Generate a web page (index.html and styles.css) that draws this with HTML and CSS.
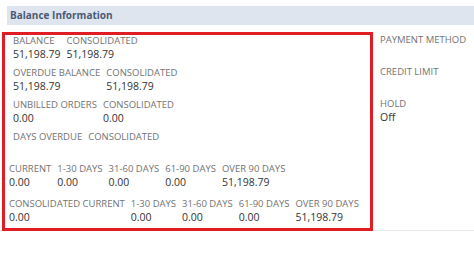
FILE: index.html
```html
<!DOCTYPE html>
<html lang="en">
<head>
  <meta charset="UTF-8">
  <title>Balance Information</title>
  <link rel="stylesheet" href="styles.css">
</head>
<body>
  <div class="section-title">Balance Information</div>

  <div class="section">
    <div class="balance-box">
      <div class="row">
        <div class="field"><div class="label">Balance</div><div class="value">51,198.79</div></div>
        <div class="field"><div class="label">Consolidated</div><div class="value">51,198.79</div></div>
      </div>
      <div class="row">
        <div class="field"><div class="label">Overdue Balance</div><div class="value">51,198.79</div></div>
        <div class="field"><div class="label">Consolidated</div><div class="value">51,198.79</div></div>
      </div>
      <div class="row">
        <div class="field"><div class="label">Unbilled Orders</div><div class="value">0.00</div></div>
        <div class="field"><div class="label">Consolidated</div><div class="value">0.00</div></div>
      </div>
      <div class="row">
        <div class="field"><div class="label">Days Overdue</div><div class="value"></div></div>
        <div class="field"><div class="label">Consolidated</div><div class="value"></div></div>
      </div>

      <!-- aging -->
      <div class="row aging first">
        <div class="field"><div class="label">Current</div><div class="value">0.00</div></div>
        <div class="field"><div class="label">1-30 Days</div><div class="value">0.00</div></div>
        <div class="field"><div class="label">31-60 Days</div><div class="value">0.00</div></div>
        <div class="field"><div class="label">61-90 Days</div><div class="value">0.00</div></div>
        <div class="field"><div class="label">Over 90 Days</div><div class="value">51,198.79</div></div>
      </div>
      <div class="row aging">
        <div class="field"><div class="label">Consolidated Current</div><div class="value">0.00</div></div>
        <div class="field"><div class="label">1-30 Days</div><div class="value">0.00</div></div>
        <div class="field"><div class="label">31-60 Days</div><div class="value">0.00</div></div>
        <div class="field"><div class="label">61-90 Days</div><div class="value">0.00</div></div>
        <div class="field"><div class="label">Over 90 Days</div><div class="value">51,198.79</div></div>
      </div>
    </div>

    <div class="side">
      <div class="field"><div class="label">Payment Method</div><div class="value"></div></div>
      <div class="field"><div class="label">Credit Limit</div><div class="value"></div></div>
      <div class="field"><div class="label">Hold</div><div class="value">Off</div></div>
    </div>
  </div>
</body>
</html>
```

FILE: styles.css
```css
body {
  font-family: "Open Sans", sans-serif;
  background-color: #fff;
  margin: 0;
  padding: 0;
}

.section-title {
  margin: 6px 0 0 7px;
  height: 19px;
  line-height: 19px;
  padding-left: 3px;
  background-color: #dfe5ee;
  color: #4a5a75;
  font-size: 10px;
  font-weight: bold;
}

.section {
  display: flex;
  margin-top: 7px;
  border-bottom: 1px solid #e6e9ef;
}

.balance-box {
  box-sizing: border-box;
  flex-shrink: 0;
  width: 371px;
  margin-left: 2px;
  margin-bottom: -1px;
  border: 3px solid #e11d24;
  padding: 0 0 4px 8px;
}

.row {
  display: flex;
  margin-bottom: 6px;
}

.row.aging {
  margin-left: -4px;
  margin-bottom: 9px;
}

.row.aging.first {
  margin-top: 4px;
}

.row.aging:last-child {
  margin-bottom: 0;
}

.field {
  padding-right: 6px;
}

.label {
  font-size: 9.5px;
  line-height: 12px;
  color: #737373;
  text-transform: uppercase;
  white-space: nowrap;
}

.value {
  font-size: 10.5px;
  line-height: 14px;
  height: 14px;
  color: #333;
  white-space: nowrap;
}

.side {
  flex-shrink: 0;
  margin-left: 7px;
  padding-top: 2px;
}

.side .field {
  margin-bottom: 6px;
}
```
